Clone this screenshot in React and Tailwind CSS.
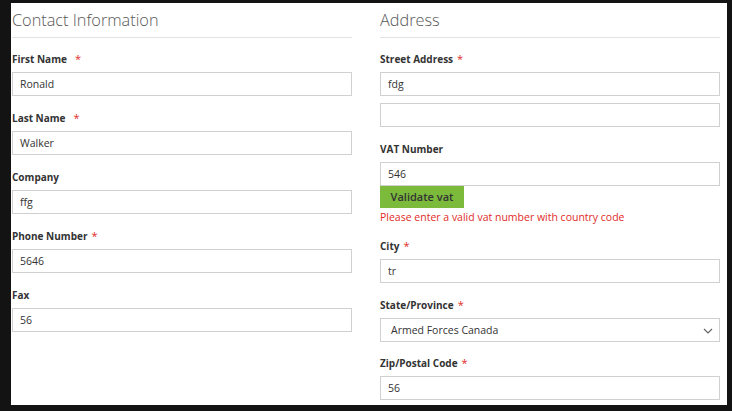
import React from "react";

const font = { fontFamily: '"Open Sans", "Noto Sans", sans-serif' };

function Label({ text, req, wide }) {
  return (
    <div className="h-4 leading-4 text-[10px] font-bold text-[#333]">
      {text}
      {req && (
        <span className={`text-[#e02b27] font-normal text-[11px] ${wide ? "ml-[8px]" : "ml-[4px]"}`}>*</span>
      )}
    </div>
  );
}

function Input({ value, className = "" }) {
  return (
    <div
      className={`h-[24px] border border-[#d0d0d0] bg-white px-[7px] pt-[1px] flex items-center text-[10.5px] text-[#333] ${className}`}
    >
      {value}
    </div>
  );
}

function Field({ label, req, wide, value, first }) {
  return (
    <div className={first ? "mt-[13px]" : "mt-[14px]"}>
      <Label text={label} req={req} wide={wide} />
      <Input value={value} className="mt-[5px]" />
    </div>
  );
}

function Heading({ children }) {
  return (
    <div className="pt-[6px] pb-[6px] border-b border-[#e3e3e3]">
      <div className="text-[16.3px] leading-[22px] font-light text-[#575757]">{children}</div>
    </div>
  );
}

export default function App() {
  return (
    <div className="w-[732px] h-[411px] bg-[#131313] pl-[11px] pt-[3px] pr-[5px] pb-[6px]" style={font}>
      <div className="bg-white h-full flex gap-[28px] pl-[1px] pr-[7px]">
        <div className="w-[340px]">
          <Heading>Contact Information</Heading>
          <Field first label="First Name" req wide value="Ronald" />
          <Field label="Last Name" req wide value="Walker" />
          <Field label="Company" value="ffg" />
          <Field label="Phone Number" req value="5646" />
          <Field label="Fax" value="56" />
        </div>
        <div className="w-[340px]">
          <Heading>Address</Heading>
          <div className="mt-[13px]">
            <Label text="Street Address" req />
            <Input value="fdg" className="mt-[5px]" />
            <Input value="" className="mt-[7px]" />
          </div>
          <div className="mt-[14px]">
            <Label text="VAT Number" />
            <Input value="546" className="mt-[5px]" />
            <button className="w-[84px] h-[22px] bg-[#7bba3b] text-[#333] text-[11px] font-semibold flex items-center justify-center">
              Validate vat
            </button>
            <div className="h-4 leading-4 text-[10.5px] text-[#e02b27] mt-[1px]">
              Please enter a valid vat number with country code
            </div>
          </div>
          <div className="mt-[13px]">
            <Label text="City" req />
            <Input value="tr" className="mt-[5px]" />
          </div>
          <div className="mt-[14px]">
            <Label text="State/Province" req />
            <div className="mt-[5px] h-[24px] border border-[#d0d0d0] bg-white pl-[10px] pr-[6px] pt-[1px] flex items-center justify-between text-[10.5px] text-[#333]">
              <span>Armed Forces Canada</span>
              <svg width="10" height="6" viewBox="0 0 10 6" fill="none">
                <path d="M1 1l4 4 4-4" stroke="#666" strokeWidth="1.2" />
              </svg>
            </div>
          </div>
          <div className="mt-[13px]">
            <Label text="Zip/Postal Code" req />
            <Input value="56" className="mt-[5px]" />
          </div>
        </div>
      </div>
    </div>
  );
}
